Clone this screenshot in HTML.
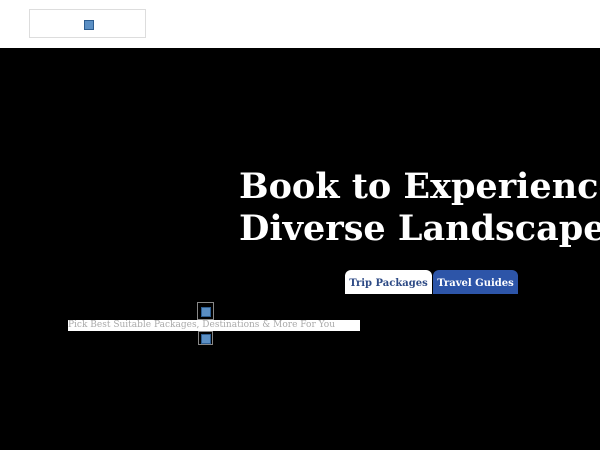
<!DOCTYPE html>
<html><head><style>
body{margin:0;width:600px;height:450px;overflow:hidden;background:#000;font-family:"DejaVu Serif","Liberation Serif",serif;position:relative}
.top{position:absolute;left:0;top:0;width:600px;height:48px;background:#fff}
.logo{position:absolute;left:29px;top:9px;width:117px;height:29px;border:1px solid #ddd;box-sizing:border-box}
.ic{position:absolute;width:8px;height:8px;background:#5b8fc4;border:1px solid #2d5d90}
.clip{position:absolute;left:230px;top:166px;width:370px;height:90px;overflow:hidden}
h1{position:absolute;left:9px;top:0;margin:0;color:#fff;font-size:35px;line-height:42px;font-weight:bold;white-space:nowrap}
.tab{position:absolute;top:270px;height:24px;font-size:10px;font-weight:bold;line-height:27px;text-align:center;border-radius:6px 6px 0 0;white-space:nowrap}
.box{position:absolute;border:1px solid #888;box-sizing:border-box}
.inp{position:absolute;left:68px;top:320px;width:292px;height:11px;background:#fff;color:#aaa;font-size:9px;line-height:11px;white-space:nowrap;overflow:hidden}
</style></head><body>
<div class="top"><div class="logo"><div class="ic" style="left:54px;top:10px"></div></div></div>
<div class="clip"><h1>Book to Experience<br>Diverse Landscapes</h1></div>
<div class="tab" style="left:345px;width:87px;background:#fff;color:#2d4a85">Trip Packages</div>
<div class="tab" style="left:433px;width:85px;background:#2d55a8;color:#fff">Travel Guides</div>
<div class="box" style="left:197px;top:302px;width:17px;height:18px"><div class="ic" style="left:3px;top:4px"></div></div>
<div class="inp">Pick Best Suitable Packages, Destinations &amp; More For You</div>
<div class="box" style="left:198px;top:331px;width:15px;height:14px"><div class="ic" style="left:2px;top:2px"></div></div>
</body></html>
